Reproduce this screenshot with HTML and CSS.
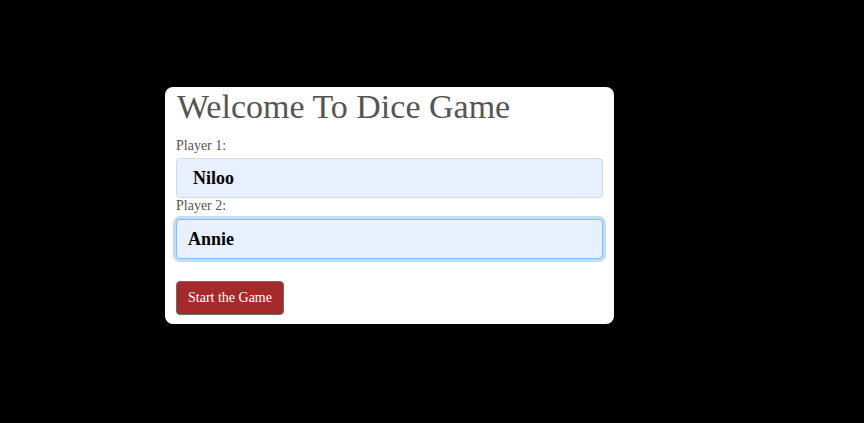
FILE: index.html
```html
<!DOCTYPE html>
<html>
<head>
<meta charset="utf-8">
<link rel="stylesheet" href="styles.css">
</head>
<body>
<div class="page">
  <div class="card">
    <h1 class="title">Welcome To Dice Game</h1>
    <label class="label label-first">Player 1:</label>
    <div class="field field-one">Niloo</div>
    <label class="label">Player 2:</label>
    <div class="field field-two">Annie</div>
    <button class="btn">Start the Game</button>
  </div>
</div>
</body>
</html>
```
FILE: styles.css
```css
html, body {
  margin: 0;
  padding: 0;
  background: #000;
  height: 100%;
}
.page {
  padding: 87px 0 0 165px;
}
.card {
  width: 449px;
  box-sizing: border-box;
  background: #fff;
  border-radius: 8px;
  padding: 1px 11px 9px 11px;
  display: flex;
  flex-direction: column;
  align-items: flex-start;
  font-family: "Liberation Serif", "Times New Roman", serif;
}
.title {
  margin: 0 0 0 1px;
  font-size: 34px;
  font-weight: normal;
  line-height: 37px;
  color: #555;
}
.label {
  display: block;
  font-size: 14px;
  line-height: 16px;
  color: #555;
}
.label-first {
  margin-top: 13px;
}
.field {
  box-sizing: border-box;
  width: 100%;
  height: 40px;
  background: #e8f0fe;
  border: 1px solid #d4d9e0;
  border-radius: 4px;
  font-size: 18px;
  font-weight: bold;
  color: #000;
  display: flex;
  align-items: center;
}
.field-one {
  margin-top: 4px;
  padding-left: 16px;
}
.field-two {
  margin-top: 5px;
  padding-left: 11px;
  border-color: #80bdff;
  box-shadow: 0 0 0 3px rgba(0, 123, 255, 0.25);
}
.btn {
  margin-top: 22px;
  height: 34px;
  padding: 0 11px 0 11px;
  background: #a52a2a;
  color: #fff;
  border: 1px solid #6c6c6c;
  border-radius: 4px;
  font-family: "Liberation Serif", "Times New Roman", serif;
  font-size: 14px;
}
```
